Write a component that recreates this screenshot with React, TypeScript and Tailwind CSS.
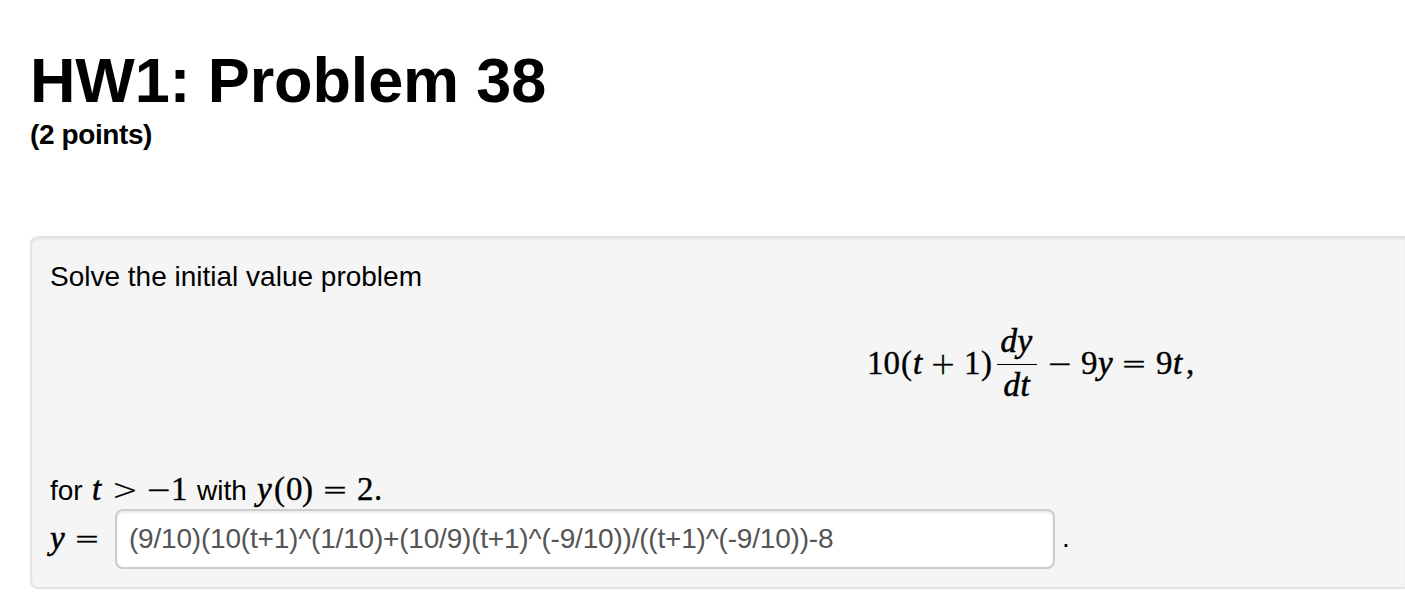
import { useState } from "react";
import type { ReactNode } from "react";

// one math symbol, the width includes the gap to the next symbol
function Sym({ w, children }: { w: string; children: ReactNode }) {
  return <span className={`inline-block shrink-0 ${w}`}>{children}</span>;
}

function Var({ w, children }: { w: string; children: ReactNode }) {
  return (
    <span className={`inline-block shrink-0 italic [-webkit-text-stroke:0.6px_black] ${w}`}>{children}</span>
  );
}

function Op({ w, children }: { w: string; children: ReactNode }) {
  return (
    <span className={`inline-block shrink-0 font-['DejaVu_Sans','Liberation_Sans',sans-serif] text-[31px] font-extralight ${w}`}>
      {children}
    </span>
  );
}

const math =
  "font-['Liberation_Serif',serif] text-[33px] leading-[40px] whitespace-nowrap [-webkit-text-stroke:0.35px_black]";

function Equation() {
  return (
    <div className={`ml-[817px] mt-[21px] flex h-[90px] items-center ${math}`}>
      <Sym w="w-[34px]">10</Sym>
      <Sym w="w-[12px]">(</Sym>
      <Var w="w-[17px]">t</Var>
      <Op w="w-[34px]">+</Op>
      <Sym w="w-[17px]">1</Sym>
      <Sym w="w-[16px]">)</Sym>
      <span className="mb-[3px] flex w-10 shrink-0 flex-col items-center">
        <span className="flex h-[46px] items-center">
          <Var w="w-[17px]">d</Var>
          <Var w="w-[16px]">y</Var>
        </span>
        <span className="h-px w-full bg-black" />
        <span className="flex h-[40px] items-center">
          <Var w="w-[17px]">d</Var>
          <Var w="w-[10px]">t</Var>
        </span>
      </span>
      <span className="w-[10px] shrink-0" />
      <Op w="w-[34px]">−</Op>
      <Sym w="w-[17px]">9</Sym>
      <Var w="w-[23px]">y</Var>
      <Op w="w-[35px]">=</Op>
      <Sym w="w-[17px]">9</Sym>
      <Var w="w-[13px]">t</Var>
      <Sym w="w-[8px]">,</Sym>
    </div>
  );
}

function Condition() {
  const word = "shrink-0 font-['Liberation_Sans',sans-serif] text-[28px] [-webkit-text-stroke:0]";
  return (
    <div className={`mt-[61px] flex h-10 items-baseline ${math}`}>
      <span className={`w-[42px] ${word}`}>for</span>
      <Var w="w-[20px]">t</Var>
      <Op w="w-[34px]">&gt;</Op>
      <Op w="w-[25px]">−</Op>
      <Sym w="w-[26px]">1</Sym>
      <span className={`w-[60px] ${word}`}>with</span>
      <Var w="w-[17px]">y</Var>
      <Sym w="w-[12px]">(</Sym>
      <Sym w="w-[16px]">0</Sym>
      <Sym w="w-[20px]">)</Sym>
      <Op w="w-[35px]">=</Op>
      <Sym w="w-[17px]">2</Sym>
      <Sym w="w-[8px]">.</Sym>
    </div>
  );
}

export default function App() {
  const [answer, setAnswer] = useState("(9/10)(10(t+1)^(1/10)+(10/9)(t+1)^(-9/10))/((t+1)^(-9/10))-8");

  return (
    <div className="h-[615px] w-full overflow-hidden bg-white pl-[30px] pt-11 font-['Liberation_Sans',Arial,sans-serif] text-[28px] leading-10 text-black">
      <h1 className="text-[63px] font-bold leading-[72px] tracking-[-0.13px] whitespace-nowrap">HW1: Problem 38</h1>
      <p className="-mt-px font-bold tracking-[-0.4px]">(2 points)</p>

      <div className="mt-[81px] h-[353px] rounded-l-lg border-2 border-r-0 border-[#e3e3e3] bg-[#f5f5f5] pl-[18px] pt-[19px] shadow-[inset_0_2px_2px_rgba(0,0,0,0.05)]">
        <p>Solve the initial value problem</p>
        <Equation />
        <Condition />
        <div className="flex h-[60px] items-center">
          <span className={`-mt-0.5 flex w-[65px] shrink-0 ${math}`}>
            <Var w="w-[24px]">y</Var>
            <Op w="w-[34px]">=</Op>
          </span>
          <input
            value={answer}
            onChange={(e) => setAnswer(e.target.value)}
            className="h-[60px] w-[940px] rounded-lg border-2 border-[#ccc] bg-white px-3 text-[28px] tracking-[-0.2px] text-[#555] shadow-[inset_0_2px_2px_rgba(0,0,0,0.075)] outline-none"
          />
          <span className="-mt-0.5 ml-[7px]">.</span>
        </div>
      </div>
    </div>
  );
}
